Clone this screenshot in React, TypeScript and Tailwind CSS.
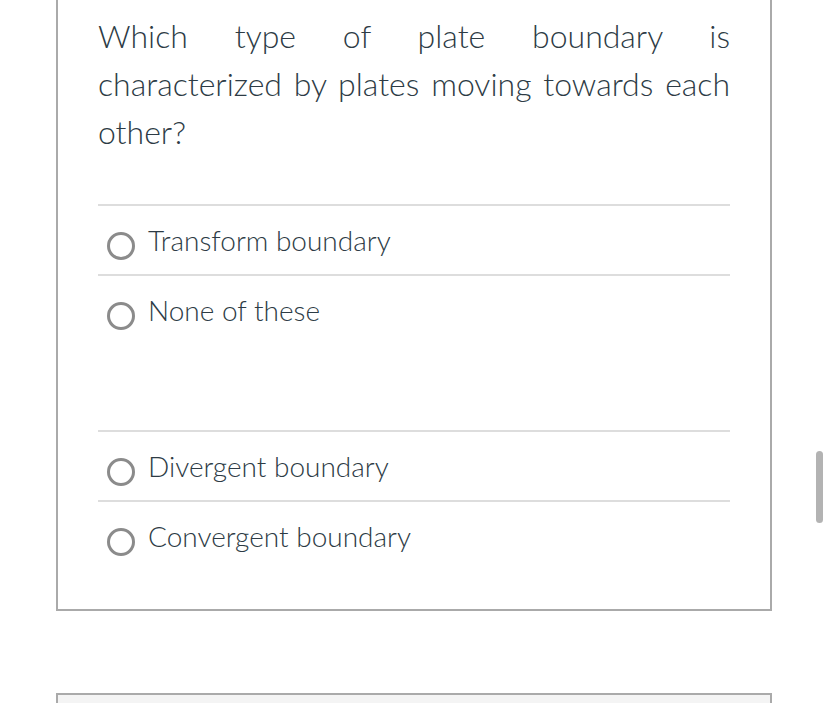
import React from "react";

function Option({ label }: { label: string }) {
  return (
    <div className="flex items-start border-t-2 border-[#dddddd] pt-[10px] pb-[10px]">
      <div className="ml-[9px] mt-[16px] h-[28px] w-[28px] shrink-0 rounded-full border-[3px] border-[#8b8b8b] bg-white" />
      <div className="ml-[13px] text-[28px] font-light leading-[48px] text-[#2d3b45]">{label}</div>
    </div>
  );
}

export default function App() {
  return (
    <div
      className="relative h-[703px] w-[828px] overflow-hidden bg-white"
      style={{ fontFamily: "Lato, 'Open Sans', sans-serif" }}
    >
      <div className="ml-[56px] w-[716px] border-x-2 border-b-2 border-[#aaaaaa] pt-[12px] pb-[39px]">
        <div className="px-[40px]">
          <p className="text-justify text-[32px] font-light leading-[48px] text-[#2d3b45]">
            Which type of plate boundary is characterized by plates moving towards each other?
          </p>
          <div className="mt-[48px]">
            <Option label="Transform boundary" />
            <Option label="None of these" />
          </div>
          <div className="mt-[86px]">
            <Option label="Divergent boundary" />
            <Option label="Convergent boundary" />
          </div>
        </div>
      </div>
      <div className="ml-[56px] mt-[82px] h-[60px] w-[716px] border-2 border-[#aaaaaa] bg-[#f4f4f4]" />
      <div className="absolute left-[816px] top-[451px] h-[72px] w-[7px] rounded-full bg-[#b3b3b3]" />
    </div>
  );
}
